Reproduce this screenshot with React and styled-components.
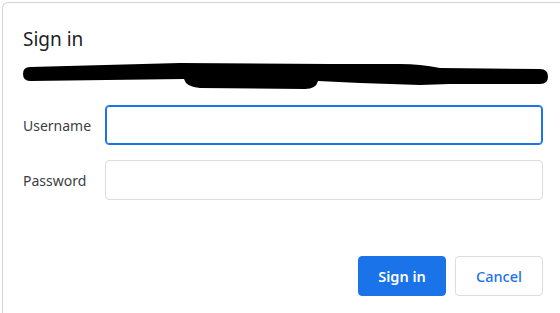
import React from 'react'
import styled, { createGlobalStyle } from 'styled-components'

const Global = createGlobalStyle`
html,body{
margin:0;
padding:0;
background:#fff;
overflow:hidden;
}
body{
font-family:"Segoe UI","Noto Sans","Open Sans",sans-serif;
}
`;

const Dialog = styled.div`
box-sizing:border-box;
margin:2px 0 0 2px;
width:calc(100vw - 2px);
height:calc(100vh - 2px);
padding:0 17px 0 20px;
border:1px solid #d3d3d3;
border-right:none;
border-bottom:none;
border-radius:6px 0 0 0;
background:#fff;
display:flex;
flex-direction:column;
`;

const Title = styled.h1`
margin:23px 0 0 0;
font-size:19px;
font-weight:400;
line-height:26px;
color:#202124;
`;

const Redacted = styled.svg`
display:block;
margin-top:9px;
width:530px;
height:30px;
margin-left:-3px;
`;

const Form = styled.div`
display:flex;
flex-direction:column;
gap:15px;
margin-top:14px;
`;

const Row = styled.label`
display:flex;
align-items:center;
`;

const Label = styled.span`
width:82px;
font-size:14px;
color:#3c4043;
`;

const Input = styled.div`
flex:1;
height:40px;
box-sizing:border-box;
border:1px solid ${p => p.focused ? '#1a73e8' : '#dadce0'};
box-shadow:${p => p.focused ? 'inset 0 0 0 1px #1a73e8' : 'none'};
border-radius:4px;
background:#fff;
`;

const Actions = styled.div`
display:flex;
justify-content:flex-end;
gap:9px;
margin-top:56px;
`;

const Button = styled.button`
width:88px;
height:40px;
box-sizing:border-box;
border-radius:4px;
font-family:inherit;
font-size:14.5px;
font-weight:${p => p.primary ? 600 : 500};
cursor:pointer;
background:${p => p.primary ? '#1a73e8' : '#fff'};
color:${p => p.primary ? '#fff' : '#1a73e8'};
border:1px solid ${p => p.primary ? '#1a73e8' : '#dadce0'};
`;

const Main = () => {
  return (
    <>
      <Global />
      <Dialog>
        <Title>Sign in</Title>
        <Redacted viewBox="20 60 530 30">
          <path
            fill="#000"
            d="M30 66 L180 62 L330 63 L400 63 Q420 63 440 67 L540 68 Q548 68 548 75.5 Q548 83 540 83 L450 83 L420 84 L360 82 L318 80 Q316 88 305 88 L200 87 Q186 86 184 78 L30 80 Q23 80 23 73 Q23 66 30 66 Z"
          />
        </Redacted>
        <Form>
          <Row>
            <Label>Username</Label>
            <Input focused />
          </Row>
          <Row>
            <Label>Password</Label>
            <Input />
          </Row>
        </Form>
        <Actions>
          <Button primary>Sign in</Button>
          <Button>Cancel</Button>
        </Actions>
      </Dialog>
    </>
  )
}
export default Main;
